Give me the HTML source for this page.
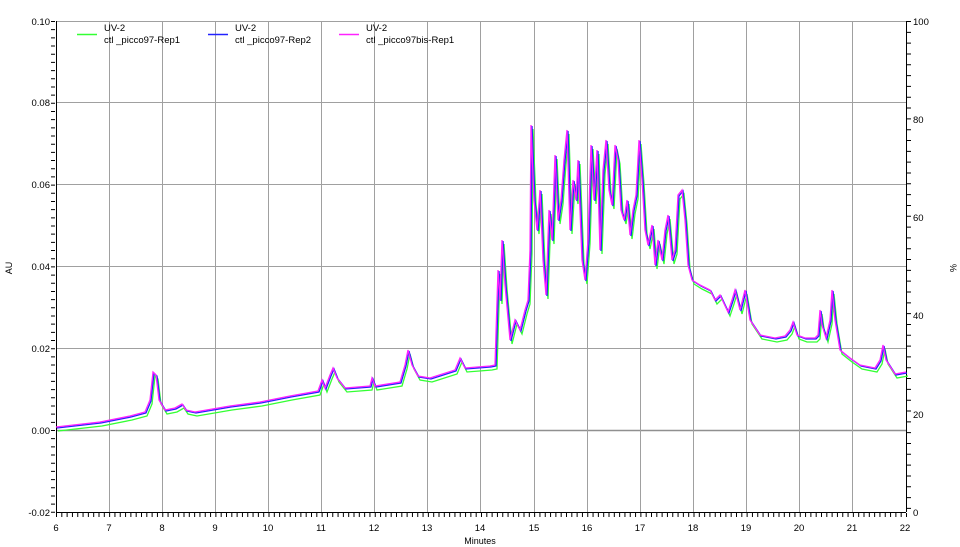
<!DOCTYPE html>
<html><head><meta charset="utf-8"><style>
html,body{margin:0;padding:0;background:#fff;}
svg{display:block;font-family:"Liberation Sans",Arial,sans-serif;}
</style></head><body>
<svg width="960" height="547" viewBox="0 0 960 547" xmlns="http://www.w3.org/2000/svg">
<g stroke="#a0a0a0" stroke-width="1">
<line x1="56" y1="21.5" x2="906" y2="21.5"/>
<line x1="56" y1="102.5" x2="906" y2="102.5"/>
<line x1="56" y1="184.5" x2="906" y2="184.5"/>
<line x1="56" y1="266.5" x2="906" y2="266.5"/>
<line x1="56" y1="348.5" x2="906" y2="348.5"/>
<line x1="56" y1="430.5" x2="906" y2="430.5" stroke="#909090" stroke-width="1.5"/>
<line x1="109.5" y1="21" x2="109.5" y2="512"/>
<line x1="162.5" y1="21" x2="162.5" y2="512"/>
<line x1="215.5" y1="21" x2="215.5" y2="512"/>
<line x1="268.5" y1="21" x2="268.5" y2="512"/>
<line x1="321.5" y1="21" x2="321.5" y2="512"/>
<line x1="374.5" y1="21" x2="374.5" y2="512"/>
<line x1="427.5" y1="21" x2="427.5" y2="512"/>
<line x1="480.5" y1="21" x2="480.5" y2="512"/>
<line x1="534.5" y1="21" x2="534.5" y2="512"/>
<line x1="587.5" y1="21" x2="587.5" y2="512"/>
<line x1="640.5" y1="21" x2="640.5" y2="512"/>
<line x1="693.5" y1="21" x2="693.5" y2="512"/>
<line x1="746.5" y1="21" x2="746.5" y2="512"/>
<line x1="799.5" y1="21" x2="799.5" y2="512"/>
<line x1="852.5" y1="21" x2="852.5" y2="512"/>
</g>
<g stroke="#000" stroke-width="1">
<line x1="56.5" y1="21" x2="56.5" y2="512"/>
<line x1="906.5" y1="21" x2="906.5" y2="512"/>
<line x1="56" y1="512.5" x2="906" y2="512.5"/>
<line x1="56" y1="515" x2="907" y2="515" stroke-width="4" stroke-dasharray="1 4.3125"/>
<line x1="53" y1="21" x2="53" y2="513" stroke-width="4" stroke-dasharray="1 7.18"/>
<line x1="909" y1="21" x2="909" y2="513" stroke-width="4" stroke-dasharray="1 9.82"/>
</g>
<g fill="#000" font-size="9.5">
<text x="50" y="25" text-anchor="end">0.10</text>
<text x="50" y="106" text-anchor="end">0.08</text>
<text x="50" y="188" text-anchor="end">0.06</text>
<text x="50" y="270" text-anchor="end">0.04</text>
<text x="50" y="352" text-anchor="end">0.02</text>
<text x="50" y="434" text-anchor="end">0.00</text>
<text x="50" y="516" text-anchor="end">-0.02</text>
<text x="913" y="25">100</text>
<text x="913" y="123">80</text>
<text x="913" y="221">60</text>
<text x="913" y="319">40</text>
<text x="913" y="418">20</text>
<text x="913" y="516">0</text>
<text x="56" y="531" text-anchor="middle">6</text>
<text x="109" y="531" text-anchor="middle">7</text>
<text x="162" y="531" text-anchor="middle">8</text>
<text x="215" y="531" text-anchor="middle">9</text>
<text x="268" y="531" text-anchor="middle">10</text>
<text x="321" y="531" text-anchor="middle">11</text>
<text x="374" y="531" text-anchor="middle">12</text>
<text x="427" y="531" text-anchor="middle">13</text>
<text x="480" y="531" text-anchor="middle">14</text>
<text x="534" y="531" text-anchor="middle">15</text>
<text x="587" y="531" text-anchor="middle">16</text>
<text x="640" y="531" text-anchor="middle">17</text>
<text x="693" y="531" text-anchor="middle">18</text>
<text x="746" y="531" text-anchor="middle">19</text>
<text x="799" y="531" text-anchor="middle">20</text>
<text x="852" y="531" text-anchor="middle">21</text>
<text x="905" y="531" text-anchor="middle">22</text>
<text x="480" y="544" text-anchor="middle" font-size="9">Minutes</text>
<text x="12" y="268" text-anchor="middle" transform="rotate(-90 12 268)" font-size="9">AU</text>
<text x="950" y="268" text-anchor="middle" transform="rotate(90 950 268)" font-size="9">%</text>
<text x="104" y="31">UV-2</text><text x="104" y="43">ctl _picco97-Rep1</text>
<text x="235" y="31">UV-2</text><text x="235" y="43">ctl _picco97-Rep2</text>
<text x="366" y="31">UV-2</text><text x="366" y="43">ctl _picco97bis-Rep1</text>
</g>
<line x1="77" y1="34.5" x2="97" y2="34.5" stroke="#33ff33" stroke-width="1.5"/>
<line x1="208" y1="34.5" x2="228" y2="34.5" stroke="#2222ff" stroke-width="1.5"/>
<line x1="339" y1="34.5" x2="359" y2="34.5" stroke="#ff22ff" stroke-width="1.5"/>
<defs>
<polyline id="tr" fill="none" points="56,427 100,422 130,416 145,412 150,400 153,372 156,375 159,400 165,410 175,408 182,404 186,410 195,412 230,406 260,402 290,396 318,391 322,380 325,388 330,375 333,368 337,378 345,388 370,386 372,378 375,386 400,382 405,365 408,350 412,365 418,376 430,378 455,370 460,358 465,368 490,366 495,365 498,270 500,300 502,240 505,285 510,340 515,320 520,330 525,310 528,300 530,250 531,125 534,200 537,230 540,190 543,260 546,295 549,210 552,240 555,155 558,220 561,200 564,160 567,130 570,230 573,180 576,200 578,160 582,260 585,280 588,240 591,145 594,200 597,150 600,250 603,170 606,140 609,190 612,205 615,145 618,160 621,210 624,220 627,200 630,235 633,210 636,195 639,140 642,180 645,230 648,245 652,225 655,265 658,240 662,260 665,230 668,215 672,260 675,250 678,195 682,190 685,220 688,265 692,280 700,285 710,290 715,300 720,295 728,312 732,300 735,290 740,310 745,290 750,320 760,335 775,338 785,336 790,330 793,322 797,335 805,338 815,338 818,335 820,310 822,325 826,338 830,320 832,290 835,320 840,350 850,358 860,365 875,368 880,360 883,345 886,360 895,374 906,372"/>
</defs>
<use href="#tr" stroke="#33ff33" stroke-width="1.3" transform="translate(2,4)"/>
<use href="#tr" stroke="#2222ff" stroke-width="1.3" transform="translate(1,1)"/>
<use href="#tr" stroke="#ff22ff" stroke-width="1.3"/>
</svg>
</body></html>
